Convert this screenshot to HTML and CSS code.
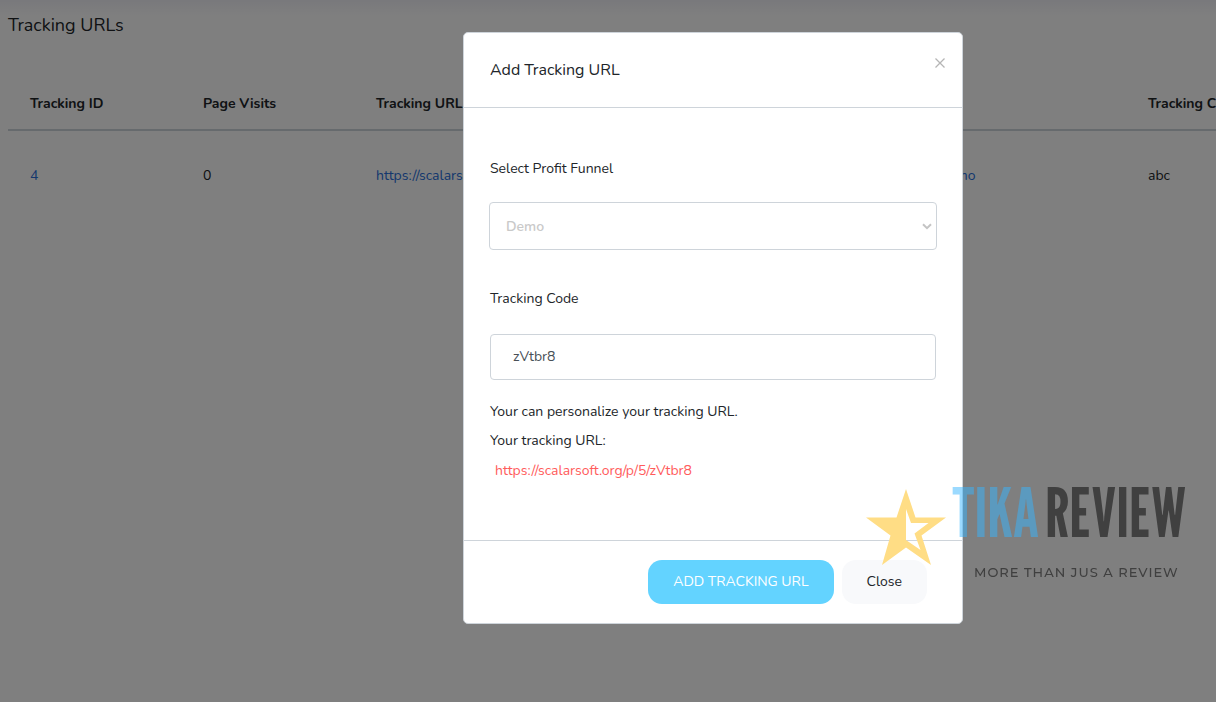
FILE: index.html
```html
<!DOCTYPE html>
<html lang="en">
<head>
  <meta charset="UTF-8">
  <meta name="viewport" content="width=device-width, initial-scale=1.0">
  <title>Tracking URLs</title>
  <link rel="stylesheet" href="styles.css">
</head>
<body>
  <main class="page">
    <h1 class="page-title">Tracking URLs</h1>
    <table class="tracking-table">
      <thead>
        <tr>
          <th class="col-id">Tracking ID</th>
          <th class="col-visits">Page Visits</th>
          <th class="col-url">Tracking URL</th>
          <th class="col-funnel"></th>
          <th class="col-code">Tracking Code</th>
        </tr>
      </thead>
      <tbody>
        <tr>
          <td><a href="#">4</a></td>
          <td>0</td>
          <td><a href="#">https://scalarsoft.org/p/4/abc</a></td>
          <td><a href="#">Demo</a></td>
          <td>abc</td>
        </tr>
      </tbody>
    </table>
  </main>

  <div class="backdrop">
    <form class="modal" role="dialog" aria-labelledby="modal-title">
      <div class="modal-header">
        <h2 id="modal-title">Add Tracking URL</h2>
        <button type="button" class="close-icon" aria-label="Close">
          <svg width="12" height="12" viewBox="0 0 12 12"><path d="M1.5 1.5l9 9M10.5 1.5l-9 9" stroke="#b5b5b5" stroke-width="1.3" fill="none"/></svg>
        </button>
      </div>

      <div class="modal-body">
        <label for="funnel">Select Profit Funnel</label>
        <div class="select-wrap">
          <select id="funnel">
            <option>Demo</option>
          </select>
          <svg class="arrow" width="10" height="7" viewBox="0 0 10 7"><path d="M1 1.2l4 4 4-4" stroke="#c4c4c4" stroke-width="2" fill="none"/></svg>
        </div>

        <label for="code">Tracking Code</label>
        <input type="text" id="code" value="zVtbr8">

        <p>Your can personalize your tracking URL.</p>
        <p>Your tracking URL:</p>
        <p class="url">https://scalarsoft.org/p/5/zVtbr8</p>
      </div>

      <div class="modal-footer">
        <button type="submit" class="btn btn-add">ADD TRACKING URL</button>
        <button type="button" class="btn btn-close">Close</button>
      </div>
    </form>
  </div>

  <!-- Watermark -->
  <div class="watermark">
    <svg class="star" width="80" height="76" viewBox="0 0 80 76">
      <path fill-rule="evenodd" fill="#ffdd85" d="M40 0L49.500 28.500H80L55.500 46.500 65 76 40 58.500 16 76 24.500 46.500 0 28.500H30.500ZM40 20V51L54.500 61 48.500 44.500 62.500 34H45Z"/>
    </svg>
    <div class="brand">
      <div class="brand-name"><span class="tika">TIKA</span><span class="review">REVIEW</span></div>
      <div class="tagline">MORE THAN JUS A REVIEW</div>
    </div>
  </div>
</body>
</html>
```

FILE: styles.css
```css
* {
  box-sizing: border-box;
}
body {
  margin: 0;
  min-height: 100vh;
  background: linear-gradient(#f2f2f8, #fff 16px);
  font-family: Nunito, Lato, sans-serif;
  font-size: 14px;
  line-height: 20px;
  color: #212529;
}
h1, h2, p {
  margin: 0;
  font-weight: normal;
}
.page {
  padding: 12px 0 0 8px;
  overflow: hidden;
}
.page-title {
  font-size: 18px;
  line-height: 26px;
  margin-bottom: 38px;
}
.tracking-table {
  table-layout: fixed;
  width: 1336px;
  border-collapse: collapse;
}
.tracking-table th, .tracking-table td {
  padding: 18px 22px 15px;
  text-align: left;
  white-space: nowrap;
}
.tracking-table th {
  font-weight: bold;
  border-bottom: 2px solid #cdd4da;
}
.tracking-table td {
  padding-top: 35px;
}
.tracking-table a {
  color: #2a6fdb;
  text-decoration: none;
}
.col-id, .col-visits {
  width: 173px;
}
.col-url {
  width: 562px;
}
.col-funnel {
  width: 210px;
}

.backdrop {
  position: fixed;
  inset: 0;
  padding: 32px 0 32px 210px;
  background: rgba(0, 0, 0, 0.5);
}
.modal {
  max-width: 500px;
  margin: 0 auto;
  background: #fff;
  border: 1px solid #ced4da;
  border-radius: 5px;
}
.modal-header {
  display: flex;
  justify-content: space-between;
  align-items: flex-start;
  padding: 24px 16px 24px 26px;
  border-bottom: 1px solid #ced4da;
}
.modal-header h2 {
  font-size: 16px;
  line-height: 26px;
}
.close-icon {
  display: flex;
  padding: 0;
  border: 0;
  background: none;
  cursor: pointer;
}
.modal-body {
  padding: 51px 26px 59px;
}
.modal-body label {
  display: block;
  margin-bottom: 23px;
}
.select-wrap {
  display: flex;
  align-items: center;
  margin: 0 -1px 39px;
}
select, input {
  width: 100%;
  height: 48px;
  border: 1px solid #ced4da;
  border-radius: 4px;
  background: #fff;
  font: inherit;
}
select {
  appearance: none;
  padding: 1px 16px 0;
  color: #c9c9c9;
  font-weight: 600;
}
.arrow {
  margin-left: -15px;
  margin-right: 5px;
  pointer-events: none;
}
input {
  height: 46px;
  margin: 2px 0 22px;
  padding: 0 22px 2px;
  color: #495057;
}
.modal-body p {
  margin-bottom: 9px;
}
.modal-body .url {
  margin: 10px 0 0;
  padding-left: 5px;
  color: #ff5c5c;
}
.modal-footer {
  display: flex;
  justify-content: flex-end;
  gap: 8px;
  padding: 19px 35px 19px 26px;
  border-top: 1px solid #ced4da;
}
.btn {
  height: 44px;
  padding: 0 25px;
  border: 0;
  border-radius: 14px;
  font: inherit;
  cursor: pointer;
}
.btn-add {
  background: #63d3ff;
  color: #fff;
}
.btn-close {
  background: #f8f9fb;
  color: #212529;
}

.watermark {
  position: fixed;
  right: 30px;
  bottom: 120px;
  display: flex;
  gap: 6px;
  pointer-events: none;
}
.star {
  margin-top: 5px;
  mix-blend-mode: multiply;
}
.brand-name {
  display: flex;
  justify-content: space-between;
  width: 234px;
  font-family: "League Gothic", Oswald, "DejaVu Sans Condensed", sans-serif;
  font-size: 68px;
  line-height: 56px;
  white-space: nowrap;
}
.tika {
  color: rgba(56, 182, 255, 0.5);
}
.review {
  color: #404040;
}
.tagline {
  margin-top: 22px;
  padding-left: 22px;
  font-family: Montserrat, Nunito, sans-serif;
  font-size: 13px;
  line-height: 20px;
  font-weight: 500;
  letter-spacing: 1px;
  white-space: nowrap;
  color: #404040;
}
```
